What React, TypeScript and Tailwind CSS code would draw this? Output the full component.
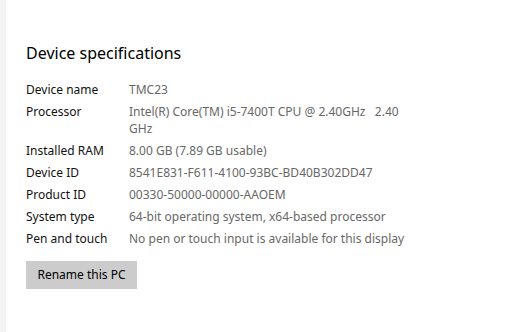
import React from "react";

const specs = [
    { label: "Device name", value: "TMC23" },
    { label: "Processor", value: "Intel(R) Core(TM) i5-7400T CPU @ 2.40GHz\u00a0\u00a0\u00a02.40\nGHz" },
    { label: "Installed RAM", value: "8.00 GB (7.89 GB usable)" },
    { label: "Device ID", value: "8541E831-F611-4100-93BC-BD40B302DD47" },
    { label: "Product ID", value: "00330-50000-00000-AAOEM" },
    { label: "System type", value: "64-bit operating system, x64-based processor" },
    { label: "Pen and touch", value: "No pen or touch input is available for this display" },
];

export default function App() {
    return (
        <div className="flex h-[332px] w-[510px] bg-white font-['Noto_Sans',sans-serif]">
            {/* nav edge */}
            <div className="w-[6px] bg-[#f4f4f4]" />

            <div className="flex flex-1 flex-col pl-[20px] pt-[42px]">
                <h2 className="text-[16px] leading-[22px] text-black">Device specifications</h2>

                <dl className="mt-[17px] flex flex-col gap-[5px] text-[12px] leading-[17px]">
                    {specs.map((s) => (
                        <div key={s.label} className="flex">
                            <dt className="w-[103px] shrink-0 text-[#111]">{s.label}</dt>
                            <dd className="whitespace-pre-line text-[#686868]">{s.value}</dd>
                        </div>
                    ))}
                </dl>

                <div className="mt-[14px]">
                    <button className="h-[28px] w-[111px] bg-[#cccccc] text-[12px] text-black">
                        Rename this PC
                    </button>
                </div>
            </div>
        </div>
    );
}
